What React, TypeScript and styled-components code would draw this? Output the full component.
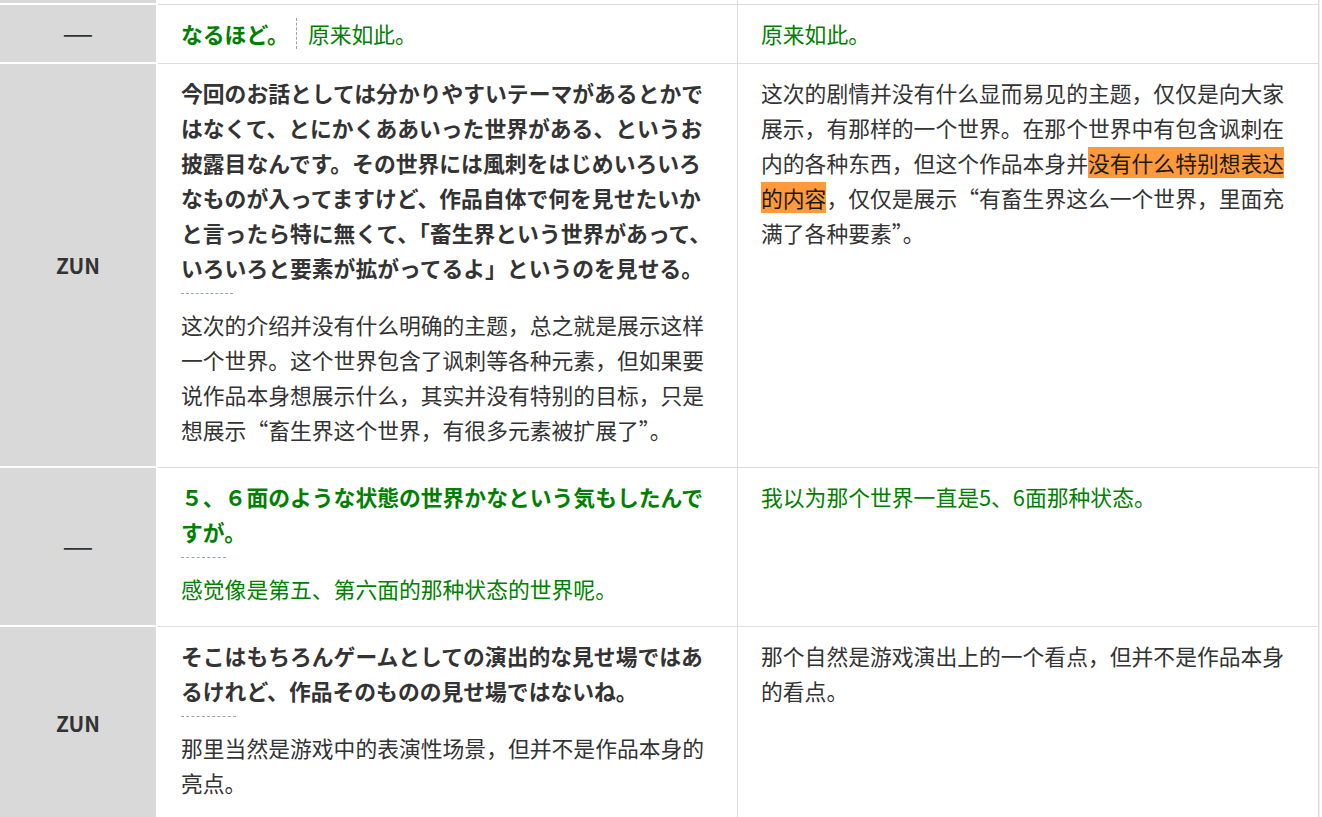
import styled, { createGlobalStyle } from "styled-components";

const GlobalStyle = createGlobalStyle`
  html, body {
    margin: 0;
    padding: 0;
    background: #fff;
  }
  body {
    font-family: "Noto Sans CJK SC", "Noto Sans", sans-serif;
    color: #333;
  }
`;

const JA = `"Noto Sans CJK JP", "Noto Sans", sans-serif`;
const ZH = `"Noto Sans CJK SC", "Noto Sans", sans-serif`;
const GREEN = "#008000";

const Table = styled.div`
  width: 1319px;
  font-size: 21.8px;
  line-height: 35px;
  box-shadow: 1px 0 0 #efefef;
`;

const Row = styled.div<{ $cut?: boolean }>`
  display: grid;
  grid-template-columns: 158px 580px 581px;
  height: ${(p) => (p.$cut ? "5px" : "auto")};
`;

const Label = styled.div`
  background: #d9d9d9;
  margin: 0 2px 2px 0;
  display: flex;
  align-items: center;
  justify-content: center;
  font-family: ${JA};
  font-weight: bold;
  font-size: 21px;
  color: #333;
`;

const Dash = styled.span`
  font-size: 17.5px;
`;

const Cell = styled.div<{ $cut?: boolean }>`
  border-right: 1px solid #ddd;
  border-bottom: 1px solid #ddd;
  padding: ${(p) => (p.$cut ? "0" : "11px 16px 12px 23px")};
`;

const Ja = styled.p<{ $green?: boolean }>`
  margin: 0;
  font-family: ${JA};
  font-weight: bold;
  color: ${(p) => (p.$green ? GREEN : "#333")};
`;

const Zh = styled.p<{ $green?: boolean }>`
  margin: 0;
  font-family: ${ZH};
  font-weight: normal;
  color: ${(p) => (p.$green ? GREEN : "#333")};
`;

const Stack = styled.div`
  padding-bottom: 8px;
`;

const Divider = styled.div<{ $w: number }>`
  width: ${(p) => p.$w}px;
  border-top: 1px dashed #9aa3b3;
  margin: 8px 0 13px;
`;

const InlineJa = styled.span`
  font-family: ${JA};
  font-weight: bold;
  color: ${GREEN};
`;

const InlineZh = styled.span`
  font-family: ${ZH};
  color: ${GREEN};
  margin-left: 7px;
  padding-left: 11px;
  border-left: 1px dashed #9aa3b3;
`;

const Mark = styled.span`
  background: #ff9a3c;
  color: #1a1a1a;
`;

interface IEntry {
  speaker: string;
  ja: string;
  zh: string;
  green?: boolean;
  rule: number;
  note: React.ReactNode;
}

const entries: IEntry[] = [
  {
    speaker: "ZUN",
    ja: "今回のお話としては分かりやすいテーマがあるとかではなくて、とにかくああいった世界がある、というお披露目なんです。その世界には風刺をはじめいろいろなものが入ってますけど、作品自体で何を見せたいかと言ったら特に無くて、「畜生界という世界があって、いろいろと要素が拡がってるよ」というのを見せる。",
    zh: "这次的介绍并没有什么明确的主题，总之就是展示这样一个世界。这个世界包含了讽刺等各种元素，但如果要说作品本身想展示什么，其实并没有特别的目标，只是想展示“畜生界这个世界，有很多元素被扩展了”。",
    rule: 52,
    note: (
      <Zh>
        这次的剧情并没有什么显而易见的主题，仅仅是向大家展示，有那样的一个世界。在那个世界中有包含讽刺在内的各种东西，但这个作品本身并
        <Mark>没有什么特别想表达的内容</Mark>
        ，仅仅是展示“有畜生界这么一个世界，里面充满了各种要素”。
      </Zh>
    ),
  },
  {
    speaker: "",
    ja: "５、６面のような状態の世界かなという気もしたんですが。",
    zh: "感觉像是第五、第六面的那种状态的世界呢。",
    green: true,
    rule: 45,
    note: <Zh $green>我以为那个世界一直是5、6面那种状态。</Zh>,
  },
  {
    speaker: "ZUN",
    ja: "そこはもちろんゲームとしての演出的な見せ場ではあるけれど、作品そのものの見せ場ではないね。",
    zh: "那里当然是游戏中的表演性场景，但并不是作品本身的亮点。",
    rule: 55,
    note: <Zh>那个自然是游戏演出上的一个看点，但并不是作品本身的看点。</Zh>,
  },
];

function Speaker({ name }: { name: string }) {
  return <Label>{name ? name : <Dash>——</Dash>}</Label>;
}

export default function App() {
  return (
    <>
      <GlobalStyle />
      <Table>
        <Row $cut>
          <Label />
          <Cell $cut />
          <Cell $cut />
        </Row>
        <Row>
          <Speaker name="" />
          <Cell>
            <InlineJa lang="ja">なるほど。</InlineJa>
            <InlineZh lang="zh">原来如此。</InlineZh>
          </Cell>
          <Cell>
            <Zh $green lang="zh">
              原来如此。
            </Zh>
          </Cell>
        </Row>
        {entries.map((item, i) => (
          <Row key={i}>
            <Speaker name={item.speaker} />
            <Cell>
              <Stack>
                <Ja lang="ja" $green={item.green}>
                  {item.ja}
                </Ja>
                <Divider $w={item.rule} />
                <Zh lang="zh" $green={item.green}>
                  {item.zh}
                </Zh>
              </Stack>
            </Cell>
            <Cell lang="zh">{item.note}</Cell>
          </Row>
        ))}
      </Table>
    </>
  );
}
